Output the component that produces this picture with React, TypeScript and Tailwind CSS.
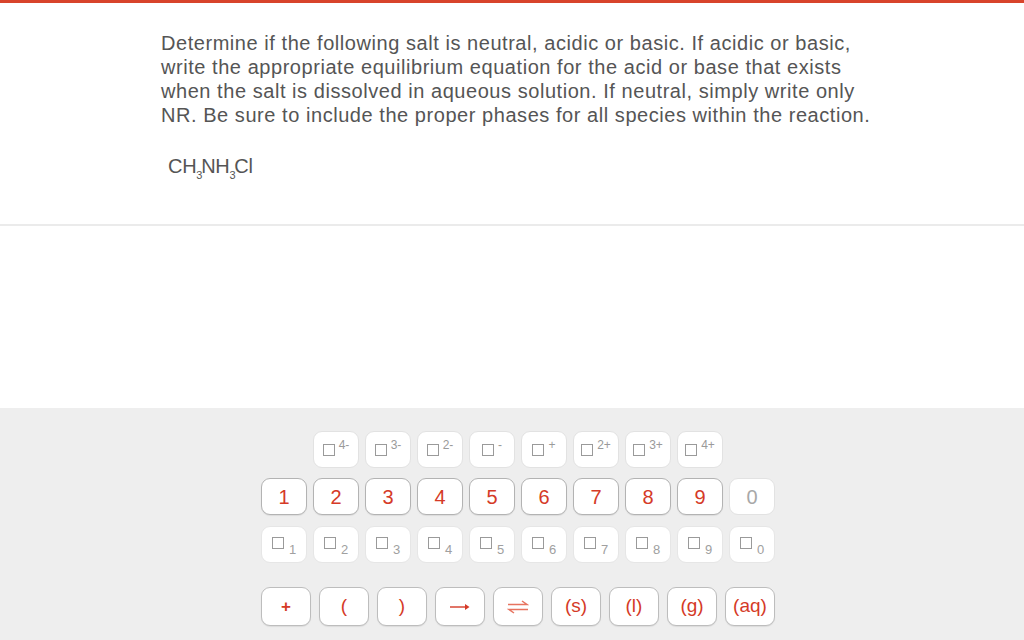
import React from 'react';

const charges = ['4-', '3-', '2-', '-', '+', '2+', '3+', '4+'];
const digits = ['1', '2', '3', '4', '5', '6', '7', '8', '9', '0'];
const subs = ['1', '2', '3', '4', '5', '6', '7', '8', '9', '0'];

const Box: React.FC = () => (
  <span className="block w-[12px] h-[12px] border border-[#9a9a9a] shrink-0" />
);

const ChargeKey: React.FC<{ label: string }> = ({ label }) => (
  <button className="w-[46px] h-[37px] rounded-[9px] bg-white border border-[#e2e2e2] flex items-center justify-center">
    <span className="flex items-center gap-[4px]">
      <Box />
      <span className="relative -top-[5px] text-[12px] leading-none text-[#9a9a9a]">{label}</span>
    </span>
  </button>
);

const DigitKey: React.FC<{ label: string }> = ({ label }) => {
  const off = label === '0';
  return (
    <button
      className={
        off
          ? 'w-[46px] h-[37px] rounded-[9px] bg-white border border-[#e2e2e2] text-[20px] text-[#a8a8a8] flex items-center justify-center'
          : 'w-[46px] h-[37px] rounded-[9px] bg-white border border-[#b3b3b3] shadow-[0_1px_1px_rgba(0,0,0,0.08)] text-[20px] text-[#d53a27] flex items-center justify-center'
      }
    >
      {label}
    </button>
  );
};

const SubKey: React.FC<{ label: string }> = ({ label }) => (
  <button className="w-[46px] h-[37px] rounded-[9px] bg-white border border-[#e6e6e6] flex items-center justify-center">
    <span className="flex items-center gap-[5px] -mt-[3px]">
      <Box />
      <span className="relative top-[6px] text-[13px] leading-none text-[#a0a0a0]">{label}</span>
    </span>
  </button>
);

const ActionKey: React.FC<{ children: React.ReactNode; light?: boolean }> = ({ children, light }) => (
  <button
    className={
      'w-[50px] h-[39px] rounded-[9px] bg-white border border-[#bdbdbd] shadow-[0_1px_1px_rgba(0,0,0,0.08)] flex items-center justify-center text-[19px] ' +
      (light ? 'text-[#e7735f]' : 'text-[#d53a27]')
    }
  >
    {children}
  </button>
);

export default function App() {
  return (
    <div className="w-[1024px] h-[640px] flex flex-col bg-white font-['Liberation_Sans',Arial,sans-serif] overflow-hidden">
      <div className="h-[3px] bg-[#d8442b]" />

      <div className="h-[223px] border-b-2 border-[#ebebeb] pl-[161px] pt-[28px]">
        <p className="text-[20px] leading-[24px] tracking-[0.55px] text-[#555555] w-[780px]">
          Determine if the following salt is neutral, acidic or basic. If acidic or basic,
          <br />
          write the appropriate equilibrium equation for the acid or base that exists
          <br />
          when the salt is dissolved in aqueous solution. If neutral, simply write only
          <br />
          NR. Be sure to include the proper phases for all species within the reaction.
        </p>
        <p className="mt-[27px] ml-[7px] text-[20px] leading-[24px] text-[#555555] tracking-[-0.3px]">
          CH<sub className="text-[11px] relative top-[6px] -mr-[1px]">3</sub>NH
          <sub className="text-[11px] relative top-[6px] -mr-[1px]">3</sub>Cl
        </p>
      </div>

      <div className="h-[182px]" />

      <div className="flex-1 bg-[#eeeeee] pl-[12px] pt-[23px] flex flex-col items-center">
        <div className="flex gap-[6px]">
          {charges.map((c) => (
            <ChargeKey key={c} label={c} />
          ))}
        </div>
        <div className="flex gap-[6px] mt-[10px]">
          {digits.map((d) => (
            <DigitKey key={d} label={d} />
          ))}
        </div>
        <div className="flex gap-[6px] mt-[11px]">
          {subs.map((s) => (
            <SubKey key={s} label={s} />
          ))}
        </div>
        <div className="flex gap-[8px] mt-[24px]">
          <ActionKey>
            <span className="text-[17px] font-bold">+</span>
          </ActionKey>
          <ActionKey>(</ActionKey>
          <ActionKey>)</ActionKey>
          <ActionKey>
            <svg width="22" height="12" viewBox="0 0 22 12">
              <path d="M1 6 H19" stroke="#d53a27" strokeWidth="1.4" />
              <path d="M16 3 L20.5 6 L16 9 Z" fill="#d53a27" />
            </svg>
          </ActionKey>
          <ActionKey light>
            <svg width="22" height="14" viewBox="0 0 22 14">
              <path d="M1 4.5 H20 L15 1" stroke="#e7735f" strokeWidth="1.5" fill="none" />
              <path d="M21 9.5 H2 L7 13" stroke="#e7735f" strokeWidth="1.5" fill="none" />
            </svg>
          </ActionKey>
          <ActionKey>(s)</ActionKey>
          <ActionKey>(l)</ActionKey>
          <ActionKey>(g)</ActionKey>
          <ActionKey>(aq)</ActionKey>
        </div>
      </div>
    </div>
  );
}
